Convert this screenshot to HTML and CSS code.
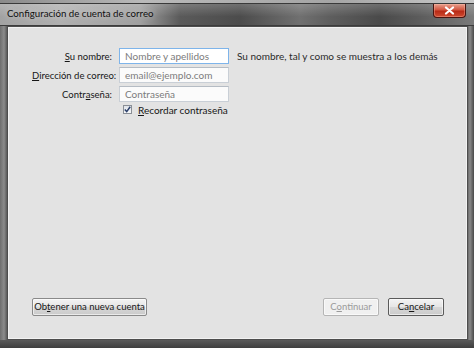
FILE: index.html
```html
<!DOCTYPE html>
<html lang="es">
<head>
<meta charset="utf-8">
<title>Configuración de cuenta de correo</title>
<link rel="stylesheet" href="styles.css">
</head>
<body>
<div class="screen">
  <div class="desktop-strip"></div>
  <div class="window">
    <div class="titlebar">
      <span class="title">Configuración de cuenta de correo</span>
      <button class="close" aria-label="Cerrar">
        <svg width="11" height="9" viewBox="0 0 11 9"><path d="M2 1.5 L9 7.5 M9 1.5 L2 7.5" stroke="#fff" stroke-width="2.2" stroke-linecap="round"/></svg>
      </button>
    </div>
    <div class="client">
      <div class="form">
        <label class="lbl"><u>S</u>u nombre:</label>
        <div class="input focus"><span class="ph">Nombre y apellidos</span></div>
        <span class="hint">Su nombre, tal y como se muestra a los demás</span>

        <label class="lbl"><u>D</u>irección de correo:</label>
        <div class="input"><span class="ph">email@ejemplo.com</span></div>
        <span></span>

        <label class="lbl">Contr<u>a</u>seña:</label>
        <div class="input"><span class="ph">Contraseña</span></div>
        <span></span>

        <span></span>
        <div class="check">
          <span class="box">
            <svg width="7" height="7" viewBox="0 0 7 7"><path d="M0.8 3.6 L2.7 5.6 L6.2 0.8" fill="none" stroke="#2a3f6a" stroke-width="1.5"/></svg>
          </span>
          <span><u>R</u>ecordar contraseña</span>
        </div>
        <span></span>
      </div>
      <div class="spacer"></div>
      <div class="buttons">
        <button class="btn wide">Ob<u>t</u>ener una nueva cuenta</button>
        <div class="right">
          <button class="btn disabled">C<u>o</u>ntinuar</button>
          <button class="btn default">Ca<u>n</u>celar</button>
        </div>
      </div>
    </div>
    <div class="bottom-frame"></div>
  </div>
</div>
</body>
</html>
```

FILE: styles.css
```css
html, body {
  margin: 0;
  padding: 0;
  background: #2e2e2e;
}

.screen {
  width: 474px;
  height: 348px;
  display: flex;
  flex-direction: column;
  overflow: hidden;
  font-family: "Lato", "Open Sans", sans-serif;
  font-size: 10px;
  color: #161616;
}

.desktop-strip {
  height: 4px;
  flex: none;
  background: linear-gradient(to right, #8a8a8a 0%, #b9b9b9 30%, #a5a5a5 70%, #c9c9c9 100%);
  border-bottom: 1px solid #3a3a3a;
  box-sizing: border-box;
}

.window {
  flex: 1;
  display: flex;
  flex-direction: column;
  background: linear-gradient(to right, #6e6e6e 0px, #8c8c8c 4px, #5a5a5a 7px, #5a5a5a 467px, #8a8a8a 470px, #4a4a4a 474px);
}

.titlebar {
  height: 21px;
  flex: none;
  display: flex;
  align-items: flex-start;
  padding-left: 7px;
  padding-right: 8px;
  background:
    linear-gradient(to bottom, rgba(255,255,255,0.2), rgba(255,255,255,0) 60%),
    linear-gradient(to right, #a2a2a2 0px, #b0b0b0 60px, #a0a0a0 140px, #5a5a5a 180px, #4c4c4c 240px, #707070 300px, #5e5e5e 330px, #4a4a4a 380px, #5c5c5c 420px, #7a7a7a 474px);
  border-bottom: 1px solid #3c3c3c;
}

.title {
  line-height: 19px;
  font-size: 9.7px;
  color: #101010;
  text-shadow: 0 0 6px rgba(255,255,255,0.6);
}

.close {
  margin-left: auto;
  width: 33px;
  height: 14px;
  padding: 0;
  border: 1px solid #4a1410;
  border-top: none;
  border-radius: 0 0 4px 4px;
  background: linear-gradient(to bottom, #e8a08e 0%, #d2553f 45%, #b82a16 55%, #cf4a30 100%);
  display: flex;
  align-items: center;
  justify-content: center;
  box-shadow: inset 0 0 0 1px rgba(255,200,180,0.35);
}

.client {
  flex: 1;
  margin: 0 6px 0 7px;
  background: #e3e3e3;
  border: 1px solid #4d4d4d;
  box-shadow: inset 0 0 0 1px #f2f2f2;
  display: flex;
  flex-direction: column;
  padding: 21px 23px 23px 24px;
  box-sizing: border-box;
}

.bottom-frame {
  height: 8px;
  flex: none;
  background: linear-gradient(to bottom, #5a5a5a, #3e3e3e);
}

.form {
  display: grid;
  grid-template-columns: 80px 110px 1fr;
  grid-template-rows: 16px 16px 16px 9px;
  row-gap: 3px;
  column-gap: 7px;
  align-items: center;
}

.lbl {
  text-align: right;
  white-space: nowrap;
  font-size: 9.5px;
  color: #161616;
}

.input {
  height: 16px;
  box-sizing: border-box;
  border: 1px solid #c9cfd6;
  border-top-color: #b5bcc4;
  background: #fbfbfb;
  padding-left: 5px;
  display: flex;
  align-items: center;
}

.input.focus {
  border-color: #7eb4ea;
  background: #fff;
}

.ph {
  color: #7c7c7c;
  white-space: nowrap;
}

.hint {
  white-space: nowrap;
  color: #2a2a2a;
  padding-left: 1px;
}

.check {
  display: flex;
  align-items: center;
  gap: 6px;
  padding-left: 4px;
  white-space: nowrap;
  color: #161616;
}

.box {
  width: 9px;
  height: 9px;
  box-sizing: border-box;
  border: 1px solid #8a8f96;
  background: linear-gradient(#dfe3e8, #f6f7f9);
  display: flex;
  align-items: center;
  justify-content: center;
}

.spacer {
  flex: 1;
}

.buttons {
  display: flex;
  justify-content: space-between;
  align-items: center;
}

.right {
  display: flex;
  gap: 9px;
}

.btn {
  height: 18px;
  box-sizing: border-box;
  padding: 0;
  font-family: inherit;
  font-size: 9.5px;
  white-space: nowrap;
  color: #161616;
  border: 1px solid #8a8a8a;
  border-radius: 2px;
  background: linear-gradient(to bottom, #f3f3f3 0%, #e6e6e6 48%, #d6d6d6 52%, #cbcbcb 100%);
  box-shadow: inset 0 0 0 1px rgba(255,255,255,0.6);
  line-height: 16px;
}

.btn.wide {
  width: 115px;
}

.btn.disabled {
  width: 56px;
  color: #9a9a9a;
  border-color: #b5b5b5;
  background: #f0f0f0;
}

.btn.default {
  width: 56px;
  border-color: #5b5b5b;
}
```
